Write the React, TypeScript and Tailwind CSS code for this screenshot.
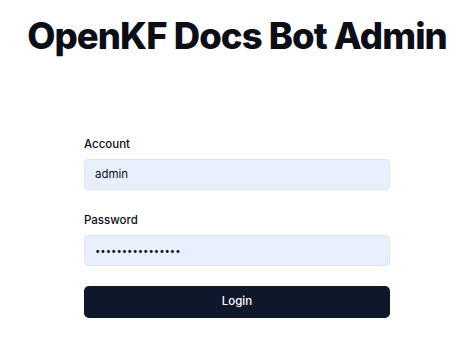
import { useState } from 'react';

export default function App() {
  const [account, setAccount] = useState('admin');
  const [password, setPassword] = useState('openkf-admin-123');

  return (
    <div className="min-h-screen bg-white font-['Inter',sans-serif] text-[#0b0d17]">
      <h1 className="pt-[18px] text-center text-[36.5px] font-extrabold leading-none tracking-tight">
        OpenKF Docs Bot Admin
      </h1>
      <form
        className="mx-auto mt-[81px] flex w-[306px] flex-col"
        onSubmit={(e) => e.preventDefault()}
      >
        <label className="text-[11.5px] font-medium leading-4">Account</label>
        <input
          className="mt-[7px] h-[31px] rounded border border-[#dde5f3] bg-[#e8f0fe] px-[10px] text-[11.5px] outline-none"
          value={account}
          onChange={(e) => setAccount(e.target.value)}
        />
        <label className="mt-[22px] text-[11.5px] font-medium leading-4">Password</label>
        <input
          type="password"
          className="mt-[7px] h-[31px] rounded border border-[#dde5f3] bg-[#e8f0fe] px-[10px] text-[9.5px] outline-none"
          value={password}
          onChange={(e) => setPassword(e.target.value)}
        />
        <button
          type="submit"
          className="mt-[20px] h-[32px] rounded-[5px] bg-[#0f172a] text-[11.5px] font-medium text-white"
        >
          Login
        </button>
      </form>
    </div>
  );
}
